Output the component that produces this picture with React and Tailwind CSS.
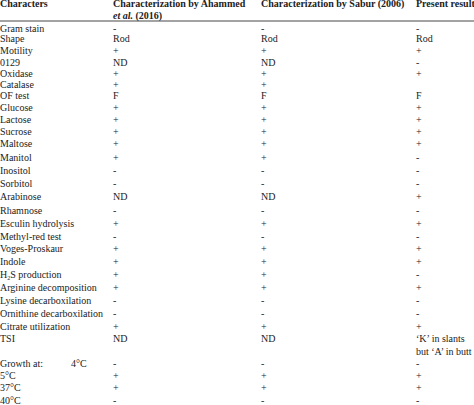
import React from "react";

// =========================
// TABLE DATA
// =========================
const rows = [
  { name: "Gram stain", a: "-", b: "-", c: "-", h: "h-[10.5px]" },
  { name: "Shape", a: "Rod", b: "Rod", c: "Rod", h: "h-[11.5px]" },
  { name: "Motility", a: "+", b: "+", c: "+", h: "h-[12px]" },
  { name: "0129", a: "ND", b: "ND", c: "-", h: "h-[11.5px]" },
  { name: "Oxidase", a: "+", b: "+", c: "+", h: "h-[11px]" },
  { name: "Catalase", a: "+", b: "+", c: "", h: "h-[11px]" },
  { name: "OF test", a: "F", b: "F", c: "F", h: "h-[11.5px]" },
  { name: "Glucose", a: "+", b: "+", c: "+", h: "h-[12px]" },
  { name: "Lactose", a: "+", b: "+", c: "+", h: "h-[12px]" },
  { name: "Sucrose", a: "+", b: "+", c: "+", h: "h-[12.5px]" },
  { name: "Maltose", a: "+", b: "+", c: "+", h: "h-[13.5px]" },
  { name: "Manitol", a: "+", b: "+", c: "-", h: "h-[13.5px]" },
  { name: "Inositol", a: "-", b: "-", c: "-", h: "h-[13px]" },
  { name: "Sorbitol", a: "-", b: "-", c: "-", h: "h-[13px]" },
  { name: "Arabinose", a: "ND", b: "ND", c: "+", h: "h-[13.5px]" },
  { name: "Rhamnose", a: "-", b: "-", c: "-", h: "h-[13.5px]" },
  { name: "Esculin hydrolysis", a: "+", b: "+", c: "+", h: "h-[12.5px]" },
  { name: "Methyl-red test", a: "-", b: "-", c: "-", h: "h-[12.5px]" },
  { name: "Voges-Proskaur", a: "+", b: "+", c: "+", h: "h-[13px]" },
  { name: "Indole", a: "+", b: "+", c: "+", h: "h-[12.5px]" },
  { name: "H2S production", a: "+", b: "+", c: "-", h: "h-[13px]" },
  { name: "Arginine decomposition", a: "+", b: "+", c: "+", h: "h-[13px]" },
  { name: "Lysine decarboxilation", a: "-", b: "-", c: "-", h: "h-[13px]" },
  { name: "Ornithine decarboxilation", a: "-", b: "-", c: "-", h: "h-[13px]" },
  { name: "Citrate utilization", a: "+", b: "+", c: "+", h: "h-[12.5px]" },
  { name: "TSI", a: "ND", b: "ND", c: "tsi", h: "h-[24.5px]" },
  { name: "Growth at:", a: "-", b: "-", c: "-", h: "h-[12px]" },
  { name: "5°C", a: "+", b: "+", c: "+", h: "h-[12.5px]" },
  { name: "37°C", a: "+", b: "+", c: "+", h: "h-[12.5px]" },
  { name: "40°C", a: "-", b: "-", c: "-", h: "h-[12px]" },
];

function NameCell({ name }) {
  if (name === "H2S production") {
    return (
      <span>
        H<sub className="text-[6px] align-baseline relative top-[2px]">2</sub>S production
      </span>
    );
  }

  if (name === "Growth at:") {
    return (
      <span className="flex">
        <span className="w-[71px]">Growth at:</span>
        <span>4°C</span>
      </span>
    );
  }

  return <span>{name}</span>;
}

function App() {
  return (
    <div
      className="w-[474px] h-[405px] overflow-hidden bg-white text-[#222] text-[10px] leading-[11.5px]"
      style={{ fontFamily: '"Liberation Serif", "Times New Roman", serif' }}
    >
      {/* HEADER */}
      <div className="grid grid-cols-[113px_148px_155px_200px] w-[616px] font-bold -mt-[2px] h-[22px]">
        <div>Characters</div>
        <div className="whitespace-nowrap">
          Characterization by Ahammed
          <br />
          <i>et al.</i> (2016)
        </div>
        <div className="whitespace-nowrap">Characterization by Sabur (2006)</div>
        <div className="whitespace-nowrap">Present result</div>
      </div>

      <div className="h-[2px] bg-[#a3a3a3]" />

      {/* BODY */}
      {rows.map((row) => (
        <div
          key={row.name}
          className={`grid grid-cols-[113px_148px_155px_58px] ${row.h}`}
        >
          <div className="whitespace-nowrap pt-[0.5px]">
            <NameCell name={row.name} />
          </div>
          <div className="pt-[0.5px]">{row.a}</div>
          <div className="pt-[0.5px]">{row.b}</div>
          <div className="whitespace-nowrap pt-[0.5px] leading-[12.5px]">
            {row.c === "tsi" ? (
              <>
                ‘K’ in slants
                <br />
                but ‘A’ in butt
              </>
            ) : (
              row.c
            )}
          </div>
        </div>
      ))}
    </div>
  );
}

export default App;
